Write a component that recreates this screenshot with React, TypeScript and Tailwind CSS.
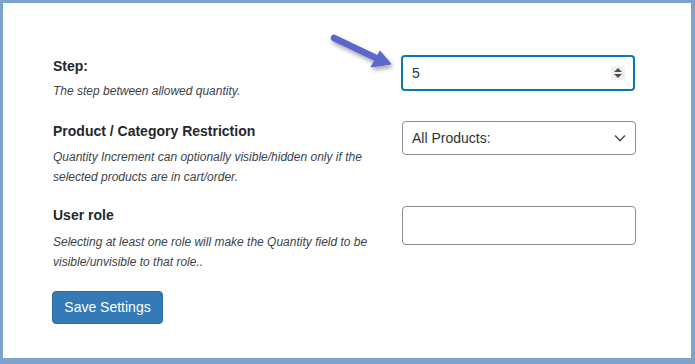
import React from "react";

function Arrow() {
  return (
    <svg
      className="absolute left-[317px] top-[22px]"
      width="80"
      height="50"
      viewBox="0 0 80 50"
    >
      <defs>
        <filter id="arrow-shadow" x="-20%" y="-20%" width="150%" height="160%">
          <feDropShadow dx="1.5" dy="3" stdDeviation="2" floodColor="#000" floodOpacity="0.35" />
        </filter>
      </defs>
      <g filter="url(#arrow-shadow)" fill="#5a68c9" stroke="#5a68c9">
        <line x1="14" y1="13" x2="56" y2="33" strokeWidth="6.5" strokeLinecap="round" />
        <polygon points="60,26 71,39 51,42" strokeWidth="1" strokeLinejoin="round" />
      </g>
    </svg>
  );
}

function Spinner() {
  return (
    <div className="flex h-[14px] w-[14px] flex-col items-center justify-center gap-[2px] bg-[#f0f0f0]">
      <svg width="8" height="4" viewBox="0 0 8 4">
        <polygon points="4,0 8,4 0,4" fill="#4b4f54" />
      </svg>
      <svg width="8" height="4" viewBox="0 0 8 4">
        <polygon points="0,0 8,0 4,4" fill="#4b4f54" />
      </svg>
    </div>
  );
}

export default function App() {
  return (
    <div
      className="relative h-[364px] w-[695px] border-b-[6px] border-l-[3px] border-r-[4px] border-t-[3px] border-[#7ba3cc] bg-white pl-[50px] pt-[52px] text-[#2c3338]"
      style={{ fontFamily: '"Liberation Sans", Arial, sans-serif' }}
    >
      <Arrow />

      {/* Step */}
      <div className="flex items-start">
        <div className="w-[349px] pr-4">
          <div className="mt-px text-[14px] font-bold leading-[20px] text-[#23282d]">Step:</div>
          <div className="mt-[5px] text-[12px] italic leading-[20px] text-[#3c434a]">
            The step between allowed quantity.
          </div>
        </div>
        <div className="-ml-px flex h-[36px] w-[234px] items-center justify-between rounded-[4px] border-2 border-[#0a78b5] pl-[9px] pr-[8px] text-[14px]">
          <span>5</span>
          <Spinner />
        </div>
      </div>

      {/* Product / Category Restriction */}
      <div className="mt-[20px] flex items-start">
        <div className="w-[349px] pr-4">
          <div className="text-[14px] font-bold leading-[20px] text-[#23282d]">
            Product / Category Restriction
          </div>
          <div className="mt-[6px] text-[12px] italic leading-[20px] text-[#3c434a]">
            Quantity Increment can optionally visible/hidden only if the selected products are in cart/order.
          </div>
        </div>
        <div className="flex h-[34px] w-[234px] items-center justify-between rounded-[4px] border border-[#8c8f94] pl-[9px] pr-[9px] text-[14px]">
          <span>All Products:</span>
          <svg width="12" height="8" viewBox="0 0 12 8">
            <polyline points="1,1.5 6,6.5 11,1.5" fill="none" stroke="#50575e" strokeWidth="1.6" />
          </svg>
        </div>
      </div>

      {/* User role */}
      <div className="mt-[18px] flex items-start">
        <div className="w-[349px] pr-4">
          <div className="text-[14px] font-bold leading-[20px] text-[#23282d]">User role</div>
          <div className="mt-[7px] text-[12px] italic leading-[20px] text-[#3c434a]">
            Selecting at least one role will make the Quantity field to be visible/unvisible to that role..
          </div>
        </div>
        <div className="mt-px h-[39px] w-[234px] rounded-[4px] border border-[#8c8f94]" />
      </div>

      <button className="-ml-px mt-[19px] h-[33px] w-[111px] rounded-[4px] border border-[#2e6da4] bg-[#337ab7] text-[14px] text-white">
        Save Settings
      </button>
    </div>
  );
}
